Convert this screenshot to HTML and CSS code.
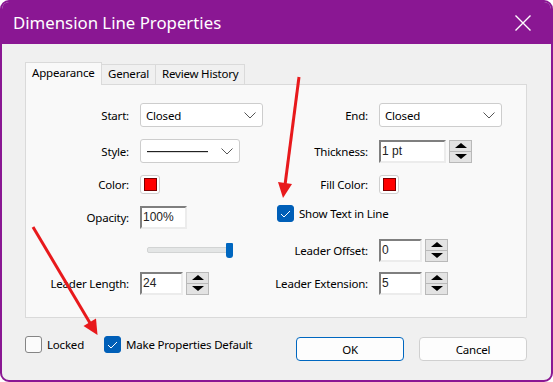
FILE: index.html
```html
<!DOCTYPE html>
<html lang="en">
<head>
    <meta charset="UTF-8">
    <meta name="viewport" content="width=device-width, initial-scale=1.0">
    <title>Dimension Line Properties</title>
    <link rel="stylesheet" href="styles.css">
</head>
<body>
    <div class="window">
        <div class="titlebar">
            <span class="title">Dimension Line Properties</span>
            <svg class="close-icon" width="18" height="18" viewBox="0 0 18 18">
                <path d="M1.5 1.5 L16.5 16.5 M16.5 1.5 L1.5 16.5" stroke="#fff" stroke-width="1.4" fill="none"/>
            </svg>
        </div>

        <div class="content">
            <div class="tabs">
                <div class="tab active">Appearance</div>
                <div class="tab">General</div>
                <div class="tab">Review History</div>
            </div>

            <div class="panel">
                <div class="form-grid">
                    <label class="lbl">Start:</label>
                    <div class="combo combo-start">
                        <span>Closed</span>
                        <svg class="chevron" width="12" height="7" viewBox="0 0 12 7"><path d="M0.5 0.5 L6 6 L11.5 0.5" stroke="#555" fill="none"/></svg>
                    </div>
                    <label class="lbl">End:</label>
                    <div class="combo combo-start">
                        <span>Closed</span>
                        <svg class="chevron" width="12" height="7" viewBox="0 0 12 7"><path d="M0.5 0.5 L6 6 L11.5 0.5" stroke="#555" fill="none"/></svg>
                    </div>

                    <label class="lbl">Style:</label>
                    <div class="combo combo-style">
                        <span class="line-sample"></span>
                        <svg class="chevron" width="12" height="7" viewBox="0 0 12 7"><path d="M0.5 0.5 L6 6 L11.5 0.5" stroke="#555" fill="none"/></svg>
                    </div>
                    <label class="lbl">Thickness:</label>
                    <div class="spin-field">
                        <div class="textbox wide">1 pt</div>
                        <div class="spinner"><span class="up"></span><span class="down"></span></div>
                    </div>

                    <label class="lbl">Color:</label>
                    <div class="swatch"><span></span></div>
                    <label class="lbl">Fill Color:</label>
                    <div class="swatch"><span></span></div>

                    <label class="lbl">Opacity:</label>
                    <div class="textbox opacity">100%</div>
                    <div class="check-row span-2">
                        <span class="checkbox checked">
                            <svg width="11" height="8" viewBox="0 0 11 8"><path d="M1 4 L4 7 L10 1" stroke="#fff" stroke-width="1" fill="none"/></svg>
                        </span>
                        Show Text in Line
                    </div>

                    <span></span>
                    <div class="slider"><span class="track"></span><span class="thumb"></span></div>
                    <label class="lbl">Leader Offset:</label>
                    <div class="spin-field">
                        <div class="textbox">0</div>
                        <div class="spinner"><span class="up"></span><span class="down"></span></div>
                    </div>

                    <label class="lbl">Leader Length:</label>
                    <div class="spin-field">
                        <div class="textbox">24</div>
                        <div class="spinner"><span class="up"></span><span class="down"></span></div>
                    </div>
                    <label class="lbl">Leader Extension:</label>
                    <div class="spin-field">
                        <div class="textbox">5</div>
                        <div class="spinner"><span class="up"></span><span class="down"></span></div>
                    </div>
                </div>
            </div>

            <div class="footer">
                <div class="check-row">
                    <span class="checkbox"></span>
                    Locked
                </div>
                <div class="check-row">
                    <span class="checkbox checked">
                        <svg width="11" height="8" viewBox="0 0 11 8"><path d="M1 4 L4 7 L10 1" stroke="#fff" stroke-width="1" fill="none"/></svg>
                    </span>
                    Make Properties Default
                </div>
                <div class="buttons">
                    <button class="btn primary">OK</button>
                    <button class="btn">Cancel</button>
                </div>
            </div>
        </div>

        <!-- annotation arrows drawn over the dialog -->
        <svg class="arrows" width="553" height="382" viewBox="0 0 553 382">
            <line x1="299" y1="77" x2="285" y2="185" stroke="#e8191c" stroke-width="3"/>
            <polygon points="278,182 292,184 283,198" fill="#e8191c"/>
            <line x1="33" y1="227" x2="90" y2="323" stroke="#e8191c" stroke-width="3"/>
            <polygon points="83.5,326 96,318.5 97.5,335" fill="#e8191c"/>
        </svg>
    </div>
</body>
</html>
```

FILE: styles.css
```css
body {
    margin: 0;
    background-color: #ffffff;
    font-family: "Noto Sans", "Open Sans", sans-serif;
    font-size: 11.5px;
    letter-spacing: -0.2px;
    color: #000;
}
.window {
    position: relative;
    box-sizing: border-box;
    width: 553px;
    height: 382px;
    border: 2px solid #8a1793;
    border-radius: 9px;
    background-color: #f0f0f0;
    overflow: hidden;
}
.titlebar {
    height: 42px;
    background-color: #8a1793;
    display: flex;
    align-items: center;
    justify-content: space-between;
    padding: 0 19px 0 11px;
}
.title {
    color: #fff;
    font-size: 16.8px;
    letter-spacing: 0;
    margin-top: -1px;
}
.close-icon {
    margin-top: -1px;
}
.content {
    padding: 18px 24px 0 23px;
}
.tabs {
    display: flex;
    align-items: flex-end;
    height: 22px;
}
.tab {
    box-sizing: border-box;
    height: 20px;
    line-height: 18px;
    padding: 0 6px;
    border: 1px solid #dadada;
    border-bottom: none;
    border-left: none;
    background-color: #f0f0f0;
}
.tab.active {
    height: 23px;
    line-height: 20px;
    padding: 0 6px 0 6px;
    width: 77px;
    border-left: 1px solid #dadada;
    background-color: #f9f9f9;
    margin-bottom: -1px;
    position: relative;
    z-index: 1;
}
.panel {
    box-sizing: border-box;
    height: 234px;
    border: 1px solid #dadada;
    background-color: #f9f9f9;
    padding-top: 18px;
}
.form-grid {
    display: grid;
    grid-template-columns: 103px 120px 97px 1fr;
    grid-template-rows: 24px 24px 19px 22px 20px 22px;
    column-gap: 11px;
    row-gap: 12px;
    align-items: center;
}
.lbl {
    text-align: right;
    white-space: nowrap;
}
.combo {
    box-sizing: border-box;
    height: 24px;
    display: flex;
    align-items: center;
    justify-content: space-between;
    background-color: #fff;
    border: 1px solid #cdcdcd;
    border-radius: 3px;
    padding: 0 6px 0 5px;
}
.combo-start {
    width: 123px;
}
.combo-style {
    width: 100px;
    padding-left: 6px;
}
.line-sample {
    width: 61px;
    height: 1px;
    background-color: #222;
    box-shadow: 0 1px 0 #d8d8d8;
}
.chevron {
    margin-top: 1px;
}
.textbox {
    box-sizing: border-box;
    width: 43px;
    height: 23px;
    background-color: #fff;
    border: 2px solid #ececec;
    border-top-color: #7f7f7f;
    border-left-color: #7f7f7f;
    font-family: "Liberation Sans", Arial, sans-serif;
    font-size: 12px;
    letter-spacing: 0;
    line-height: 19px;
    padding-left: 1px;
    color: #222;
}
.textbox.wide {
    width: 67px;
}
.textbox.opacity {
    width: 47px;
}
.spin-field {
    display: flex;
    gap: 3px;
}
.spinner {
    display: flex;
    flex-direction: column;
    width: 23px;
    height: 23px;
}
.spinner span {
    box-sizing: border-box;
    flex: 1;
    background-color: #e3e3e3;
    border: 1px solid #b9b9b9;
    display: flex;
    align-items: center;
    justify-content: center;
}
.spinner .down {
    border-top: none;
}
.spinner .up::after {
    content: "";
    border-left: 6px solid transparent;
    border-right: 6px solid transparent;
    border-bottom: 5px solid #000;
}
.spinner .down::after {
    content: "";
    border-left: 6px solid transparent;
    border-right: 6px solid transparent;
    border-top: 5px solid #000;
}
.swatch {
    box-sizing: border-box;
    width: 20px;
    height: 19px;
    border: 1px solid #cfcfcf;
    border-radius: 3px;
    background-color: #fff;
    display: flex;
    align-items: center;
    justify-content: center;
}
.swatch span {
    width: 11px;
    height: 11px;
    background-color: #ff0000;
    border: 1px solid #7a0000;
}
.check-row {
    display: flex;
    align-items: center;
    gap: 5px;
    white-space: nowrap;
}
.span-2 {
    grid-column: span 2;
    margin-left: 6px;
    margin-top: -7px;
}
.checkbox {
    box-sizing: border-box;
    width: 17px;
    height: 17px;
    border: 1px solid #858585;
    border-radius: 3px;
    background-color: #fbfbfb;
    display: flex;
    align-items: center;
    justify-content: center;
}
.checkbox.checked {
    border-color: #005fb8;
    background-color: #005fb8;
}
.slider {
    display: flex;
    align-items: center;
    margin-left: 7px;
    width: 86px;
    height: 16px;
}
.slider .track {
    flex: 1;
    height: 4px;
    background-color: #e4e6e6;
    border: 1px solid #d2d4d4;
    border-radius: 2px;
}
.slider .thumb {
    width: 7px;
    height: 15px;
    background-color: #0067c0;
    border-radius: 1px 1px 3px 3px;
    margin-left: -2px;
}
.footer {
    display: flex;
    align-items: flex-start;
    margin-top: 18px;
}
.footer .check-row {
    margin-right: 20px;
}
.buttons {
    margin-left: auto;
    display: flex;
    gap: 15px;
    padding-top: 1px;
}
.btn {
    box-sizing: border-box;
    width: 108px;
    height: 24px;
    font-family: "Noto Sans", "Open Sans", sans-serif;
    font-size: 11.5px;
    letter-spacing: -0.2px;
    background-color: #fdfdfd;
    border: 1px solid #d0d0d0;
    border-radius: 4px;
    color: #000;
    padding: 0;
}
.btn.primary {
    border-color: #0067c0;
}
.arrows {
    position: absolute;
    left: -2px;
    top: -2px;
    pointer-events: none;
}
```
